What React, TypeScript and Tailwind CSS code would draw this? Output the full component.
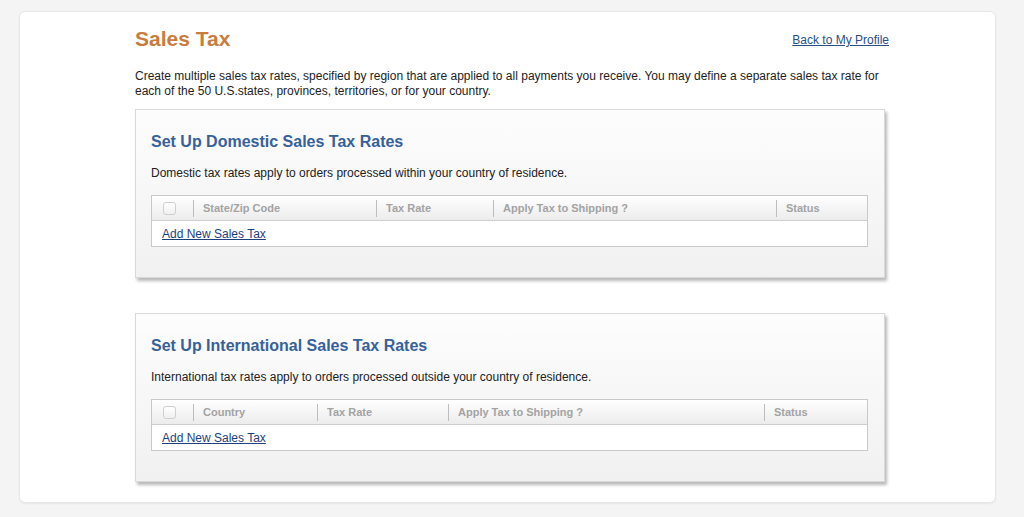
import React from "react";

type Column = { label: string; width: string };

interface TaxPanelProps {
  title: string;
  description: string;
  columns: Column[];
}

function TaxPanel({ title, description, columns }: TaxPanelProps) {
  return (
    <div className="w-[750px] border border-[#d9d9d9] bg-gradient-to-b from-[#fdfdfd] to-[#f1f1f1] shadow-[2px_3px_3px_rgba(0,0,0,0.28)] px-[15px] pt-[21px] pb-[30px]">
      <h2 className="text-[16px] leading-[22px] font-bold text-[#36619a]">{title}</h2>
      <p className="mt-[13px] text-[12px] leading-[15px] text-[#222]">{description}</p>

      {/* table */}
      <div className="mt-[14px] w-[717px] border border-[#c9c9c9] bg-white">
        <div className="flex h-[25px] items-center border-b border-[#cfcfcf] bg-gradient-to-b from-[#ffffff] to-[#ececec]">
          <div className="flex w-[41px] shrink-0 items-center pl-[11px]">
            <span className="block h-[13px] w-[13px] rounded-[3px] border border-[#cfcfcf] bg-gradient-to-b from-white to-[#f0f0f0]" />
          </div>
          {columns.map((col) => (
            <div key={col.label} className={`flex items-center ${col.width}`}>
              <span className="h-[17px] w-px bg-[#bdbdbd]" />
              <span className="pl-[9px] text-[11px] font-bold text-[#a3a3a3]">{col.label}</span>
            </div>
          ))}
        </div>
        <div className="flex h-[25px] items-center pl-[10px]">
          <a href="#" className="text-[12px] text-[#1d3f7c] underline">
            Add New Sales Tax
          </a>
        </div>
      </div>
    </div>
  );
}

export default function App() {
  return (
    <div className="min-h-[517px] bg-[#f4f4f4] pt-[11px] pb-[15px] font-['Liberation_Sans',Arial,sans-serif]">
      <div className="ml-[19px] w-[977px] rounded-[6px] border border-[#e6e6e6] bg-white pl-[115px] pr-[106px] pt-[14px] pb-[20px] shadow-[0_1px_2px_rgba(0,0,0,0.06)]">
        <div className="flex items-end justify-between">
          <h1 className="text-[21px] leading-[26px] font-bold text-[#c97d3c]">Sales Tax</h1>
          <a href="#" className="mb-[3px] text-[12px] text-[#2a4e86] underline">
            Back to My Profile
          </a>
        </div>

        <p className="mt-[17px] text-[12px] leading-[15px] text-[#222]">
          Create multiple sales tax rates, specified by region that are applied to all payments you receive. You may define a separate sales tax rate for each of the 50 U.S.states, provinces, territories, or for your country.
        </p>

        <div className="mt-[10px] flex flex-col gap-[35px]">
          <TaxPanel
            title="Set Up Domestic Sales Tax Rates"
            description="Domestic tax rates apply to orders processed within your country of residence."
            columns={[
              { label: "State/Zip Code", width: "w-[183px]" },
              { label: "Tax Rate", width: "w-[117px]" },
              { label: "Apply Tax to Shipping ?", width: "w-[283px]" },
              { label: "Status", width: "flex-1" },
            ]}
          />
          <TaxPanel
            title="Set Up International Sales Tax Rates"
            description="International tax rates apply to orders processed outside your country of residence."
            columns={[
              { label: "Country", width: "w-[124px]" },
              { label: "Tax Rate", width: "w-[131px]" },
              { label: "Apply Tax to Shipping ?", width: "w-[316px]" },
              { label: "Status", width: "flex-1" },
            ]}
          />
        </div>
      </div>
    </div>
  );
}
